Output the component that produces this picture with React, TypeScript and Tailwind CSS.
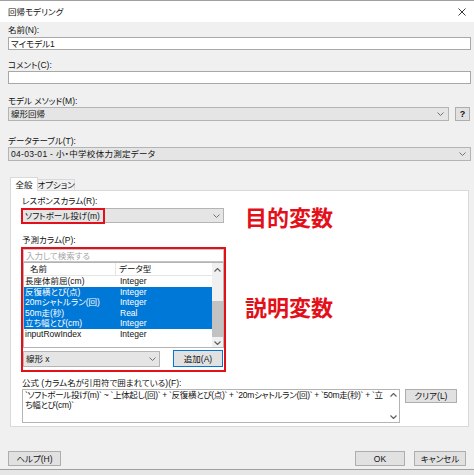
import React from "react";

const Chevron = () => (
  <svg width="7" height="4" viewBox="0 0 7 4" className="shrink-0">
    <polyline points="0.5,0.5 3.5,3.5 6.5,0.5" fill="none" stroke="#707070" strokeWidth="1" />
  </svg>
);

const UpArrow = () => (
  <svg width="7" height="4" viewBox="0 0 7 4" className="shrink-0">
    <polyline points="0.5,3.5 3.5,0.5 6.5,3.5" fill="none" stroke="#606060" strokeWidth="1.2" />
  </svg>
);

const DownArrow = () => (
  <svg width="7" height="4" viewBox="0 0 7 4" className="shrink-0">
    <polyline points="0.5,0.5 3.5,3.5 6.5,0.5" fill="none" stroke="#606060" strokeWidth="1.2" />
  </svg>
);

const rows = [
  { name: "長座体前屈(cm)", type: "Integer", sel: false },
  { name: "反復横とび(点)", type: "Integer", sel: true },
  { name: "20mシャトルラン(回)", type: "Integer", sel: true },
  { name: "50m走(秒)", type: "Real", sel: true },
  { name: "立ち幅とび(cm)", type: "Integer", sel: true },
  { name: "inputRowIndex", type: "Integer", sel: false },
];

export default function App() {
  return (
    <div className="w-[474px] h-[475px] overflow-hidden bg-[#e6e6e6] font-['Liberation_Sans','Noto_Sans_CJK_JP','Noto_Sans_CJK_SC',sans-serif] text-[8.5px] leading-[10px] text-[#111] [font-feature-settings:'palt']">
      <div className="flex flex-col h-[470px] bg-[#f0f0f0] border-t border-b border-[#a0a0a0]">
        {/* title bar */}
        <div className="h-[21px] shrink-0 bg-white flex items-center justify-between pl-[8px] pr-[8px]">
          <span>回帰モデリング</span>
          <svg width="8" height="8" viewBox="0 0 8 8">
            <line x1="0.5" y1="0.5" x2="7.5" y2="7.5" stroke="#222" strokeWidth="0.9" />
            <line x1="7.5" y1="0.5" x2="0.5" y2="7.5" stroke="#222" strokeWidth="0.9" />
          </svg>
        </div>

        <div className="flex flex-col pl-[8px] pr-[3px]">
          <div className="mt-[3px] h-[10px]">名前(N):</div>
          <div className="mt-[2px] h-[13px] border border-[#a8a8a8] bg-white flex items-center px-[2px]">マイモデル1</div>

          <div className="mt-[10px] h-[10px]">コメント(C):</div>
          <div className="mt-[1px] h-[13px] border border-[#a8a8a8] bg-white"></div>

          <div className="mt-[12px] h-[10px]">モデル メソッド(M):</div>
          <div className="mt-[1px] flex items-center">
            <div className="flex-1 h-[14px] border border-[#b4b4b4] bg-[#e5e5e5] flex items-center justify-between pl-[2px] pr-[4px]">
              <span>線形回帰</span>
              <Chevron />
            </div>
            <div className="ml-[6px] mr-[1px] w-[15px] h-[14px] border border-[#adadad] bg-[#e1e1e1] flex items-center justify-center font-bold text-[9px]">?</div>
          </div>

          <div className="mt-[15px] h-[10px]">データテーブル(T):</div>
          <div className="mt-[1px] h-[14px] border border-[#b4b4b4] bg-[#e5e5e5] flex items-center justify-between pl-[2px] pr-[4px]">
            <span className="tracking-[0.3px]">04-03-01 - 小・中学校体力測定データ</span>
            <Chevron />
          </div>

          {/* tabs */}
          <div className="mt-[16px] h-[13px] flex items-end pl-[2px]">
            <div className="relative z-10 w-[28px] h-[14px] mb-[-1px] bg-white border-l border-t border-r border-[#d9d9d9] flex items-center justify-center">全般</div>
            <div className="w-[37px] h-[11px] bg-[#f0f0f0] border-t border-r border-[#d9d9d9] flex items-center justify-center whitespace-nowrap">オプション</div>
          </div>

          {/* panel */}
          <div className="ml-[2px] mr-[2px] h-[237px] border border-[#d9d9d9] bg-white flex flex-col pl-[10px]">
            <div className="flex">
              <div className="w-[205px] flex flex-col">
                <div className="mt-[5px] ml-[1px] h-[10px]">レスポンスカラム(R):</div>
                <div className="relative mt-[2px] ml-[1px] w-[202px] h-[15px] border border-[#b4b4b4] bg-[#e5e5e5] flex items-center justify-between pl-[2px] pr-[3px]">
                  <span>ソフトボール投げ(m)</span>
                  <Chevron />
                  <div className="absolute left-[-2px] top-[-1px] w-[84px] h-[16px] border-2 border-[#e3101a]"></div>
                </div>

                <div className="mt-[12px] ml-[1px] h-[10px]">予測カラム(P):</div>
                <div className="mt-[2px] w-[205px] border-2 border-[#e3101a] flex flex-col pb-[3px]">
                  <div className="h-[13px] border border-[#c4c4c4] bg-white flex items-center px-[2px] text-[#a6a6a6]">入力して検索する</div>
                  <div className="h-[86px] border border-[#b4b4b4] bg-white flex">
                    <div className="flex-1 flex flex-col">
                      <div className="h-[13px] shrink-0 flex items-center border-b border-[#e5e5e5]">
                        <div className="w-[92px] h-full border-r border-[#e5e5e5] flex items-center pl-[6px]">名前</div>
                        <div className="pl-[3px]">データ型</div>
                      </div>
                      {rows.map((r) => (
                        <div
                          key={r.name}
                          className={
                            "h-[10.5px] shrink-0 flex items-center " +
                            (r.sel ? "bg-[#0078d7] text-white" : "")
                          }
                        >
                          <div className="w-[96px] pl-[1px] whitespace-nowrap">{r.name}</div>
                          <div>{r.type}</div>
                        </div>
                      ))}
                    </div>
                    <div className="w-[11px] bg-[#f0f0f0] flex flex-col">
                      <div className="h-[13px] flex items-center justify-center"><UpArrow /></div>
                      <div className="h-[62px] flex flex-col">
                        <div className="mt-[25px] h-[36px] bg-[#c2c2c2]"></div>
                      </div>
                      <div className="h-[9px] flex items-center justify-center"><DownArrow /></div>
                    </div>
                  </div>
                  <div className="mt-[2px] flex items-end">
                    <div className="w-[137px] h-[16px] border border-[#b4b4b4] bg-[#e5e5e5] flex items-center justify-between pl-[2px] pr-[3px]">
                      <span>線形 x</span>
                      <Chevron />
                    </div>
                    <div className="ml-[13px] w-[50px] h-[17px] border border-[#0078d7] bg-[#e1e1e1] flex items-center justify-center">追加(A)</div>
                  </div>
                </div>
              </div>

              <div className="ml-[19px] flex flex-col text-[#e3101a] font-bold text-[22px] leading-[22px] font-['Noto_Sans_CJK_JP',sans-serif] [font-feature-settings:normal]">
                <div className="mt-[14px]">目的変数</div>
                <div className="mt-[68px]">説明変数</div>
              </div>
            </div>

            <div className="mt-[6px] ml-[1px] h-[10px]">公式 (カラム名が引用符で囲まれている)(F):</div>
            <div className="mt-[1px] ml-[1px] flex items-start">
              <div className="w-[378px] h-[34px] border border-[#b4b4b4] bg-white flex">
                <div className="flex-1 pl-[2px] pt-[1px] leading-[9.5px] overflow-hidden tracking-[-0.3px] [word-break:break-all]">
                  `ソフトボール投げ(m)` ~ `上体起し(回)` + `反復横とび(点)` + `20mシャトルラン(回)` + `50m走(秒)` + `立ち幅とび(cm)`
                </div>
                <div className="w-[11px] shrink-0 flex flex-col justify-between py-[3px]">
                  <div className="flex justify-center"><UpArrow /></div>
                  <div className="flex justify-center"><DownArrow /></div>
                </div>
              </div>
              <div className="ml-[5px] w-[52px] h-[14px] border border-[#adadad] bg-[#e1e1e1] flex items-center justify-center">クリア(L)</div>
            </div>
          </div>

          {/* bottom buttons */}
          <div className="mt-[24px] h-[15px] flex justify-between">
            <div className="w-[53px] h-[15px] border border-[#adadad] bg-[#e1e1e1] flex items-center justify-center">ヘルプ(H)</div>
            <div className="flex gap-[9px] mr-[5px]">
              <div className="w-[50px] h-[15px] border border-[#adadad] bg-[#e1e1e1] flex items-center justify-center">OK</div>
              <div className="w-[52px] h-[15px] border border-[#adadad] bg-[#e1e1e1] flex items-center justify-center">キャンセル</div>
            </div>
          </div>
        </div>
      </div>
    </div>
  );
}
